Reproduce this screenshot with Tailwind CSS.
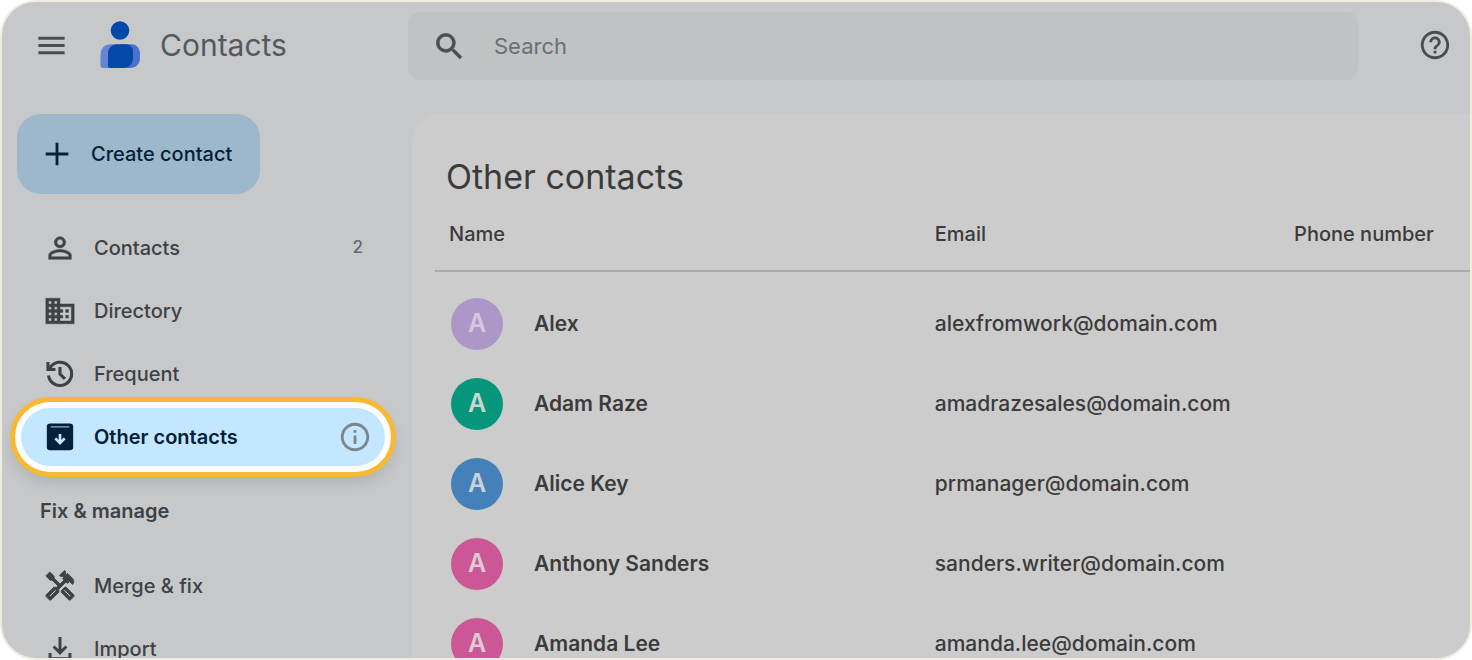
<!DOCTYPE html>
<html lang="en">
<head>
<meta charset="utf-8">
<title>Contacts</title>
<script src="https://cdn.jsdelivr.net/npm/@tailwindcss/browser@4"></script>
</head>
<body class="h-screen overflow-hidden bg-white font-['Inter',sans-serif] text-[#3f4245]">
<div class="flex h-screen flex-col overflow-hidden rounded-[36px] border-2 border-[#efede2] bg-[#c6c8ca]">
  <header class="flex h-28 shrink-0 items-start pt-[9px] pr-[18px]">
    <div class="flex h-17 w-[406px] shrink-0 items-center pl-8">
      <button type="button" aria-label="Main menu" class="text-[#4b4e51]">
        <svg class="size-[35px]" viewBox="0 0 24 24" fill="currentColor"><path d="M3 18h18v-2H3v2zm0-5h18v-2H3v2zm0-7v2h18V6H3z"/></svg>
      </button>
      <a href="#" class="ml-[31px] flex items-center gap-5">
        <svg class="h-12 w-10" viewBox="0 0 40 48"><path d="M11 23.200h8V47H3a2.500 2.500 0 0 1-2.500-2.500V35c0-8 4-11.800 10.500-11.800z" fill="#6485d2"/><path d="M20 23.200h11.500a8.500 8.500 0 0 1 8.500 8.500v5C40 43 36 47 30 47H20z" fill="#4b70d0"/><path d="M17 23.200h9a7 7 0 0 1 7 7V37c0 6-4 10-10 10H10a2 2 0 0 1-2-2V32c0-5 4-8.800 9-8.800z" fill="#0349a9"/><circle cx="20" cy="9.500" r="9.300" fill="#0349a9"/></svg>
        <span class="text-[30px] text-[#56595c]">Contacts</span>
      </a>
    </div>
    <form role="search" class="mt-px flex h-17 flex-1 items-center rounded-xl bg-[#c0c2c3] pl-6">
      <button type="submit" aria-label="Search" class="text-[#4b4e51]">
        <svg class="size-[35px]" viewBox="0 0 24 24" fill="currentColor" stroke="currentColor" stroke-width="0.4"><path d="M15.500 14h-.79l-.28-.27C15.410 12.590 16 11.110 16 9.500 16 5.910 13.090 3 9.500 3S3 5.910 3 9.500 5.910 16 9.500 16c1.610 0 3.090-.59 4.230-1.570l.27.28v.79l5 4.990L20.490 19l-4.990-5zm-6 0C7.010 14 5 11.990 5 9.500S7.010 5 9.500 5 14 7.010 14 9.500 11.990 14 9.500 14z"/></svg>
      </button>
      <input type="search" aria-label="Search" placeholder="Search" class="ml-[27px] min-w-0 flex-1 bg-transparent text-[22px] outline-none placeholder:text-[#6c6f71]">
    </form>
    <button type="button" aria-label="Help" class="ml-15 flex h-17 items-center text-[#4b4e51]">
      <svg class="size-[34px]" viewBox="0 0 24 24" fill="currentColor"><path d="M11 18h2v-2h-2v2zm1-16C6.480 2 2 6.480 2 12s4.480 10 10 10 10-4.480 10-10S17.520 2 12 2zm0 18c-4.410 0-8-3.590-8-8s3.590-8 8-8 8 3.590 8 8-3.590 8-8 8zm0-14c-2.210 0-4 1.790-4 4h2c0-1.100.9-2 2-2s2 .9 2 2c0 2-3 1.750-3 5h2c0-2.250 3-2.500 3-5 0-2.210-1.790-4-4-4z"/></svg>
    </button>
  </header>
  <div class="flex min-h-0 flex-1">
    <aside class="w-[410px] shrink-0 pl-[15px] text-[20px] font-medium">
      <button type="button" class="flex h-20 w-[243px] items-center gap-[17px] rounded-3xl bg-[#9cb8ca] pl-[23px] text-[#062037]">
        <svg class="size-[34px]" viewBox="0 0 24 24" fill="currentColor"><path d="M20 13h-7v7h-2v-7H4v-2h7V4h2v7h7v2z"/></svg>
        <span>Create contact</span>
      </button>
      <nav aria-label="Contacts" class="mt-[22px] pr-[27px] pl-1">
        <a href="#" class="flex h-[63px] items-center gap-[17px] pr-[22px] pl-[22px]">
          <svg class="size-[34px]" viewBox="0 0 24 24" fill="currentColor" stroke="currentColor" stroke-width="0.3"><path d="M12 5.900a2.100 2.100 0 1 1 0 4.200 2.100 2.100 0 0 1 0-4.200m0 9c2.970 0 6.100 1.460 6.100 2.100v1.100H5.900V17c0-.64 3.130-2.100 6.100-2.100M12 4C9.790 4 8 5.790 8 8s1.790 4 4 4 4-1.790 4-4-1.790-4-4-4zm0 9c-2.670 0-8 1.340-8 4v3h16v-3c0-2.660-5.330-4-8-4z"/></svg>
          <span class="flex-1">Contacts</span>
          <span class="text-[17px] text-[#66696b]">2</span>
        </a>
        <a href="#" class="flex h-[63px] items-center gap-[17px] pl-[22px]">
          <svg class="size-[34px]" viewBox="0 0 24 24" fill="currentColor" stroke="currentColor" stroke-width="0.3"><path fill-rule="evenodd" d="M2 3h10v4h10v14H2zM4 5v2h2V5zM8 5v2h2V5zM4 9v2h2V9zM8 9v2h2V9zM4 13v2h2v-2zM8 13v2h2v-2zM4 17v2h2v-2zM8 17v2h2v-2zM12 9v2h2v2h-2v2h2v2h-2v2h8V9zM16 11h2v2h-2zM16 15h2v2h-2z"/></svg>
          <span>Directory</span>
        </a>
        <a href="#" class="flex h-[63px] items-center gap-[17px] pl-[22px]">
          <svg class="size-[34px]" viewBox="0 0 24 24" fill="none" stroke="currentColor" stroke-width="2.200"><path d="M4.800 8A8.200 8.200 0 1 1 3.900 13M12 7v5l3.500 3.500"/><path d="M3.500 3.500v5.300h5.300"/><path d="M3.500 5.500v3.300h3.300z" fill="currentColor" stroke="none"/></svg>
          <span>Frequent</span>
        </a>
        <div class="flex h-[63px] items-center">
          <div class="flex h-[58px] flex-1 items-center rounded-full bg-[#c3e7fe] pr-[13px] text-[#04203a] shadow-[0_0_0_6px_#ffffff,0_0_0_11px_#f8b833,0_8px_14px_10px_rgba(0,0,0,0.10)]">
            <a href="#" aria-current="page" class="flex flex-1 items-center gap-[17px] pl-[22px] font-semibold">
              <svg class="size-[34px]" viewBox="0 0 24 24" fill="currentColor"><path d="M5 2.500h14a2.300 2.300 0 0 1 2.300 2.300V19a2.300 2.300 0 0 1-2.300 2.300H5A2.300 2.300 0 0 1 2.700 19V4.800A2.300 2.300 0 0 1 5 2.500z"/><path d="M5.300 5.300c0-.6.500-.9 1.200-.9h11c.7 0 1.200.3 1.200.9z" fill="#8fb0c8"/><path d="M12 9.800v6M8.700 13 12 16.300l3.300-3.300" fill="none" stroke="#c3e7fe" stroke-width="1.900"/></svg>
              <span>Other contacts</span>
            </a>
            <button type="button" aria-label="About other contacts" class="text-[#7b868e]">
              <svg class="size-[34px]" viewBox="0 0 24 24" fill="currentColor"><path d="M11 7h2v2h-2zm0 4h2v6h-2zm1-9C6.480 2 2 6.480 2 12s4.480 10 10 10 10-4.480 10-10S17.520 2 12 2zm0 18c-4.410 0-8-3.590-8-8s3.590-8 8-8 8 3.590 8 8-3.590 8-8 8z"/></svg>
            </button>
          </div>
        </div>
        <h2 class="flex h-[86px] items-center pl-[19px] font-semibold">Fix &amp; manage</h2>
        <a href="#" class="flex h-[63px] items-center gap-[17px] pl-[22px]">
          <svg class="size-[34px]" viewBox="0 0 24 24" fill="currentColor" stroke="currentColor" stroke-width="0.6" stroke-linejoin="round"><path d="m21.670 18.170-5.300-5.300h-.99l-2.540 2.540v.99l5.300 5.300c.39.39 1.020.39 1.410 0l2.120-2.120c.39-.38.39-1.020 0-1.410zm-2.830 1.420-4.240-4.240.71-.71 4.240 4.240-.71.710z"/><path d="m17.340 10.190 1.410-1.410 2.120 2.120c1.170-1.170 1.170-3.070 0-4.240l-3.540-3.540-1.410 1.410V1.710L15.220 1l-3.540 3.540.71.710h2.830l-1.410 1.410 1.060 1.060-2.890 2.890-4.130-4.130V5.060L4.830 2.040 2 4.870l3.030 3.030h1.410l4.130 4.130-.85.85H7.600l-5.300 5.300c-.39.39-.39 1.020 0 1.410l2.120 2.120c.39.39 1.020.39 1.410 0l5.300-5.300v-2.120l5.150-5.150 1.060 1.050zm-7.960 5.160-4.240 4.240-.71-.71 4.240-4.240.71.710z"/></svg>
          <span>Merge &amp; fix</span>
        </a>
        <a href="#" class="flex h-[63px] items-center gap-[17px] pl-[22px]">
          <svg class="size-[34px]" viewBox="0 0 24 24" fill="none" stroke="currentColor" stroke-width="2.100"><path d="M12 3.500v11M7.500 10.200 12 14.700l4.500-4.500M5 14.800v4h14v-4"/></svg>
          <span>Import</span>
        </a>
      </nav>
    </aside>
    <main class="min-w-0 flex-1 overflow-hidden rounded-tl-[28px] bg-[#cccccc] pl-[23px] text-[#3b3b3b]">
      <h1 class="mt-[39px] h-12 pl-[11px] text-[34px] leading-12">Other contacts</h1>
      <table class="w-full table-fixed text-left text-[21px]">
        <thead>
          <tr class="h-[70px] border-b-2 border-[#ababab] text-[20px]">
            <th scope="col" class="w-[48%] pb-1 pl-[14px] font-medium">Name</th>
            <th scope="col" class="w-[35%] pb-1 pl-[3px] font-medium">Email</th>
            <th scope="col" class="pb-1 font-medium">Phone number</th>
          </tr>
        </thead>
        <tbody class="before:block before:h-3">
          <tr class="h-20"><td class="pl-4"><div class="flex items-center gap-[31px]"><span class="flex size-[52px] items-center justify-center rounded-full bg-[#ad97c8] text-[25px] font-semibold text-[#d3cbdc]">A</span><span class="font-semibold">Alex</span></div></td><td class="pl-[3px] font-medium">alexfromwork@domain.com</td><td></td></tr>
          <tr class="h-20"><td class="pl-4"><div class="flex items-center gap-[31px]"><span class="flex size-[52px] items-center justify-center rounded-full bg-[#06967c] text-[25px] font-semibold text-[#cbd6d3]">A</span><span class="font-semibold">Adam Raze</span></div></td><td class="pl-[3px] font-medium">amadrazesales@domain.com</td><td></td></tr>
          <tr class="h-20"><td class="pl-4"><div class="flex items-center gap-[31px]"><span class="flex size-[52px] items-center justify-center rounded-full bg-[#4381b8] text-[25px] font-semibold text-[#cbd2d8]">A</span><span class="font-semibold">Alice Key</span></div></td><td class="pl-[3px] font-medium">prmanager@domain.com</td><td></td></tr>
          <tr class="h-20"><td class="pl-4"><div class="flex items-center gap-[31px]"><span class="flex size-[52px] items-center justify-center rounded-full bg-[#cc5797] text-[25px] font-semibold text-[#dccbd4]">A</span><span class="font-semibold">Anthony Sanders</span></div></td><td class="pl-[3px] font-medium">sanders.writer@domain.com</td><td></td></tr>
          <tr class="h-20"><td class="pl-4"><div class="flex items-center gap-[31px]"><span class="flex size-[52px] items-center justify-center rounded-full bg-[#cc5797] text-[25px] font-semibold text-[#dccbd4]">A</span><span class="font-semibold">Amanda Lee</span></div></td><td class="pl-[3px] font-medium">amanda.lee@domain.com</td><td></td></tr>
        </tbody>
      </table>
    </main>
  </div>
</div>
</body>
</html>
